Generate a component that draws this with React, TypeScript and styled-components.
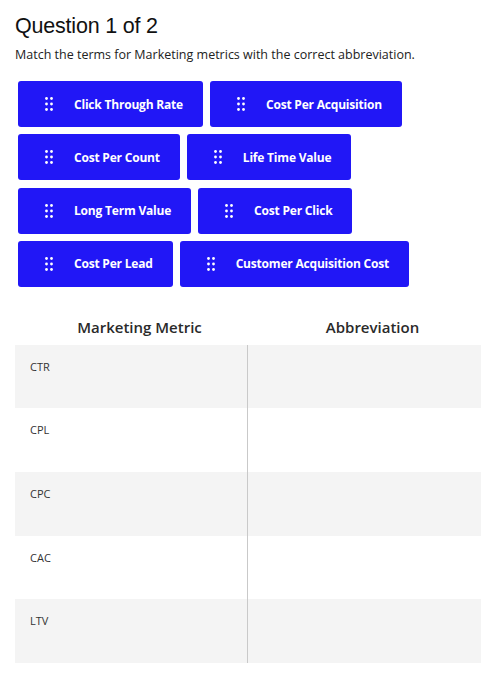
import * as React from "react";
import styled, { createGlobalStyle } from "styled-components";

const GlobalStyle = createGlobalStyle`
  body {
    margin: 0;
    background: #ffffff;
    font-family: "Open Sans", "Liberation Sans", sans-serif;
  }
`;

const terms = [
  "Click Through Rate",
  "Cost Per Acquisition",
  "Cost Per Count",
  "Life Time Value",
  "Long Term Value",
  "Cost Per Click",
  "Cost Per Lead",
  "Customer Acquisition Cost",
];

const abbreviations = ["CTR", "CPL", "CPC", "CAC", "LTV"];

const Page = styled.div`
  padding: 14px 14px 20px 15px;
  width: 466px;
`;

const Heading = styled.h2`
  margin: 0;
  font-family: "Liberation Sans", Arial, sans-serif;
  font-weight: 400;
  font-size: 21.5px;
  line-height: 24px;
  color: #111;
  letter-spacing: -0.2px;
`;

const Prompt = styled.p`
  margin: 9px 0 0;
  font-size: 12.5px;
  line-height: 16px;
  color: #222;
`;

const Bank = styled.div`
  display: flex;
  flex-wrap: wrap;
  gap: 7.3px 7px;
  margin: 18px 0 0 3px;
  width: 440px;
`;

const Chip = styled.div`
  display: flex;
  align-items: center;
  gap: 21px;
  height: 46px;
  padding: 0 20px 0 27px;
  background: #2117f6;
  border-radius: 3px;
  color: #ffffff;
  font-size: 12px;
  font-weight: 700;
  letter-spacing: -0.2px;
  white-space: nowrap;
`;

const Grip = styled.svg`
  flex: none;
  width: 8px;
  height: 14px;
`;

const Table = styled.div`
  display: grid;
  grid-template-columns: 233px 1fr;
  margin-top: 22px;
`;

const HeadCell = styled.div`
  height: 36px;
  padding-left: 16px;
  display: flex;
  align-items: center;
  justify-content: center;
  font-size: 15px;
  font-weight: 600;
  color: #2a2a2a;
`;

const Cell = styled.div<{ $shaded: boolean; $first?: boolean }>`
  height: 63.6px;
  box-sizing: border-box;
  padding: 14px 15px;
  background: ${(p) => (p.$shaded ? "#f4f4f4" : "#ffffff")};
  border-right: ${(p) => (p.$first ? "1px solid #c9c9c9" : "none")};
  font-size: 11px;
  line-height: 16px;
  color: #333;
`;

function GripIcon() {
  return (
    <Grip viewBox="0 0 8 14">
      {[1.5, 6.5].map((x) =>
        [1.5, 7, 12.5].map((y) => (
          <circle key={`${x}-${y}`} cx={x} cy={y} r={1.4} fill="#fff" />
        ))
      )}
    </Grip>
  );
}

export default function App() {
  return (
    <Page>
      <GlobalStyle />
      <Heading>Question 1 of 2</Heading>
      <Prompt>Match the terms for Marketing metrics with the correct abbreviation.</Prompt>
      <Bank>
        {terms.map((t) => (
          <Chip key={t}>
            <GripIcon />
            {t}
          </Chip>
        ))}
      </Bank>
      <Table>
        <HeadCell>Marketing Metric</HeadCell>
        <HeadCell>Abbreviation</HeadCell>
        {abbreviations.map((a, i) => (
          <React.Fragment key={a}>
            <Cell $shaded={i % 2 === 0} $first>
              {a}
            </Cell>
            <Cell $shaded={i % 2 === 0} />
          </React.Fragment>
        ))}
      </Table>
    </Page>
  );
}
